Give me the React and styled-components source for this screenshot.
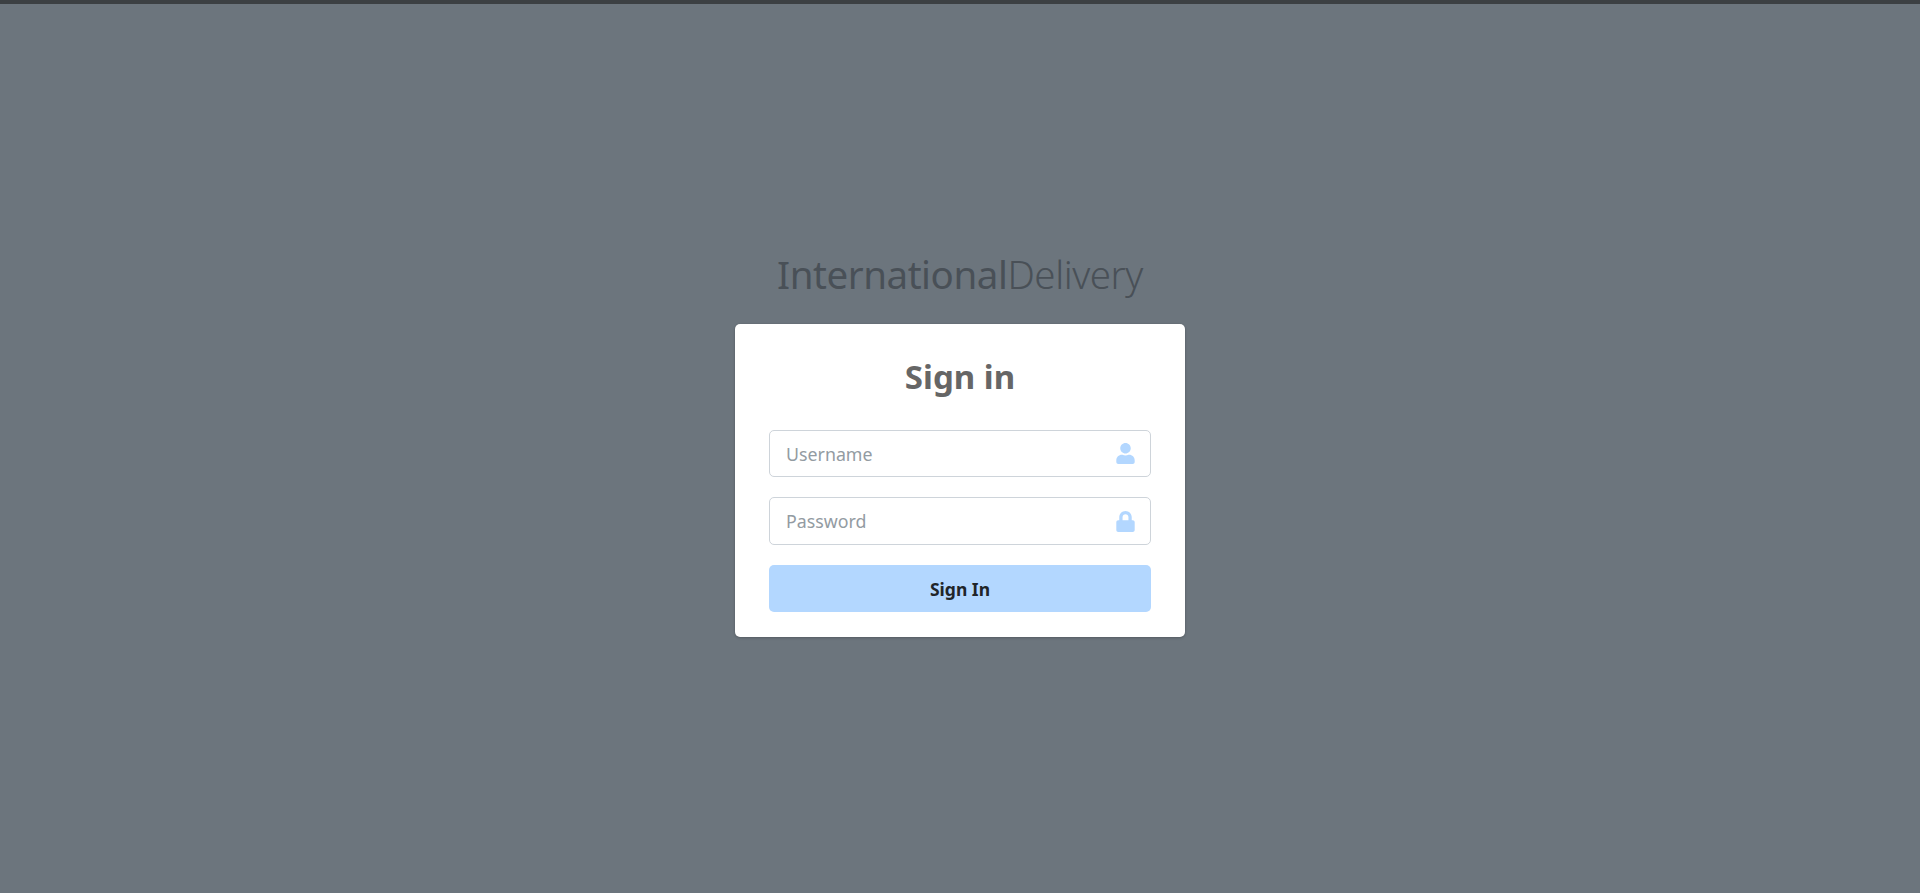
import styled, { createGlobalStyle } from "styled-components";
import { FaUser, FaLock } from "react-icons/fa";

const GlobalStyle = createGlobalStyle`
  html, body {
    margin: 0;
    height: 100%;
  }

  body {
    background: #6c757d;
    font-family: "Noto Sans", "Open Sans", sans-serif;
  }

  * {
    box-sizing: border-box;
  }
`;

const Page = styled.main`
  height: 893px;
  border-top: 4px solid #3c4043;
  display: flex;
  flex-direction: column;
  align-items: center;
  padding-top: 242px;
  overflow: hidden;
`;

const Logo = styled.div`
  height: 78px;
  font-size: 38.5px;
  line-height: 56px;
  letter-spacing: -0.45px;
  color: #495057;
  font-weight: 400;

  span {
    font-weight: 300;
  }
`;

const Card = styled.section`
  width: 450px;
  height: 313px;
  background: #fff;
  border-radius: 5px;
  box-shadow: 0 0 1px rgba(0, 0, 0, 0.125), 0 1px 3px rgba(0, 0, 0, 0.2);
  padding: 0 34px;
`;

const Title = styled.h1`
  margin: 0;
  height: 105.75px;
  padding-top: 25px;
  font-size: 33px;
  line-height: 56px;
  font-weight: 700;
  text-align: center;
  color: #666;
`;

const InputGroup = styled.div`
  height: 47.5px;
  margin-bottom: 20px;
  display: flex;
  align-items: center;
  border: 1px solid #ced4da;
  border-radius: 5px;
  padding: 0 14px 0 16px;
`;

const Input = styled.input`
  flex: 1;
  min-width: 0;
  border: 0;
  outline: 0;
  padding: 0;
  background: transparent;
  font-family: inherit;
  font-size: 17.8px;
  color: #495057;

  &::placeholder {
    color: #939ba2;
    opacity: 1;
  }
`;

const Icon = styled.span`
  display: flex;
  color: #b3d7ff;
  font-size: 21px;
`;

const SubmitButton = styled.button`
  display: block;
  width: 100%;
  height: 47.5px;
  border: 0;
  border-radius: 5px;
  background: #b3d7ff;
  color: #212529;
  font-family: inherit;
  font-size: 17.5px;
  font-weight: 700;
`;

export default function App() {
  return (
    <>
      <GlobalStyle />
      <Page>
        <Logo>
          International<span>Delivery</span>
        </Logo>
        <Card>
          <Title>Sign in</Title>
          <form>
            <InputGroup>
              <Input placeholder="Username" />
              <Icon>
                <FaUser />
              </Icon>
            </InputGroup>
            <InputGroup>
              <Input placeholder="Password" type="password" />
              <Icon>
                <FaLock />
              </Icon>
            </InputGroup>
            <SubmitButton type="button">Sign In</SubmitButton>
          </form>
        </Card>
      </Page>
    </>
  );
}
